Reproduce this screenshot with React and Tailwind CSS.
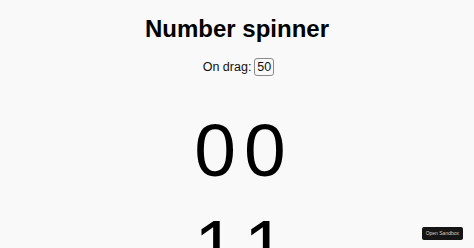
const DIGITS = ['0', '1', '2', '3', '4', '5', '6', '7', '8', '9']

function Column() {
  return (
    <div className="flex flex-col">
      {DIGITS.map((d) => (
        <span key={d} className="block h-[96px] leading-[96px]">{d}</span>
      ))}
    </div>
  )
}

export default function App() {
  return (
    <div className="relative h-screen overflow-hidden bg-[#f9f9f9] font-['Liberation_Sans',Arial,sans-serif] text-black flex flex-col items-center">
      <h1 className="mt-[15px] text-[24px] font-bold leading-[28px]">Number spinner</h1>

      <div className="mt-[15px] ml-[3px] flex items-center text-[12.5px] leading-[17px] text-[#111]">
        <span>On drag:</span>
        <span className="ml-[3px] px-[2px] h-[18px] border border-[#8a8a8a] rounded-[3px] leading-[16px]">50</span>
      </div>

      <div className="mt-[26px] ml-[6px] flex gap-[8px] text-[75px]">
        <Column />
        <Column />
      </div>

      <button className="absolute right-[11px] bottom-[8px] h-[13px] px-[4px] rounded-[2px] bg-[#151515] text-[#d0d0d0] text-[5px] leading-[13px]">
        Open Sandbox
      </button>
    </div>
  )
}
